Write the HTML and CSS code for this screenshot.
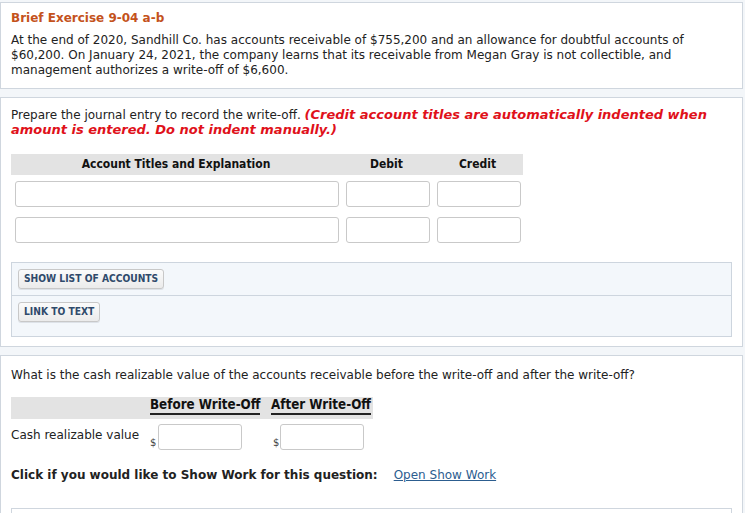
FILE: index.html
```html
<!DOCTYPE html>
<html>
<head>
<meta charset="utf-8">
<link rel="stylesheet" href="styles.css">
</head>
<body>
<div class="panel intro">
  <div class="title">Brief Exercise 9-04 a-b</div>
  <p class="body-text">At the end of 2020, Sandhill Co. has accounts receivable of $755,200 and an allowance for doubtful accounts of $60,200. On January 24, 2021, the company learns that its receivable from Megan Gray is not collectible, and management authorizes a write-off of $6,600.</p>
</div>

<div class="panel part">
  <p class="body-text prompt">Prepare the journal entry to record the write-off. <em class="note">(Credit account titles are automatically indented when amount is entered. Do not indent manually.)</em></p>
  <div class="journal">
    <div class="jhead">Account Titles and Explanation</div>
    <div class="jhead">Debit</div>
    <div class="jhead">Credit</div>
    <div class="jcell first"><input class="field" type="text"></div>
    <div class="jcell"><input class="field" type="text"></div>
    <div class="jcell"><input class="field" type="text"></div>
    <div class="jcell first last"><input class="field" type="text"></div>
    <div class="jcell last"><input class="field" type="text"></div>
    <div class="jcell last"><input class="field" type="text"></div>
  </div>
  <div class="tools">
    <div class="tool-row"><button class="btn">SHOW LIST OF ACCOUNTS</button></div>
    <div class="tool-row"><button class="btn">LINK TO TEXT</button></div>
  </div>
</div>

<div class="panel part third">
  <p class="body-text">What is the cash realizable value of the accounts receivable before the write-off and after the write-off?</p>
  <div class="crv">
    <div class="crv-head blank"></div>
    <div class="crv-head"><span>Before Write-Off</span></div>
    <div class="crv-head"><span>After Write-Off</span></div>
    <div class="crv-label">Cash realizable value</div>
    <div class="crv-cell"><span class="dollar">$</span><input class="field small" type="text"></div>
    <div class="crv-cell after"><span class="dollar">$</span><input class="field small" type="text"></div>
  </div>
  <p class="showwork">Click if you would like to Show Work for this question:<a class="link" href="#">Open Show Work</a></p>
  <div class="workbox"></div>
</div>
</body>
</html>
```

FILE: styles.css
```css
html, body {
  margin: 0;
  padding: 0;
}
body {
  background: #f3f6f9;
  font-family: Verdana, "DejaVu Sans", sans-serif;
  font-size: 12px;
  color: #222;
  padding-top: 2px;
  width: 743px;
}
.panel {
  background: #fff;
  border: 1px solid #cfd6de;
  box-sizing: border-box;
}
.intro {
  height: 87px;
  padding: 8px 10px 0 10px;
}
.title {
  color: #c4521c;
  font-weight: bold;
  font-size: 12px;
  line-height: 15px;
  margin-bottom: 7px;
}
.body-text {
  margin: 0;
  line-height: 15px;
}
.prompt {
  height: 30px;
}
.part {
  margin-top: 8px;
  padding: 10px 10px 9px 10px;
}
.note {
  color: #e0111a;
  font-weight: bold;
  font-size: 13px;
  line-height: 13px;
}
.journal {
  display: grid;
  grid-template-columns: 330px 91px 91px;
  margin-top: 16px;
}
.jhead {
  background: #e3e3e3;
  font-family: "DejaVu Sans Condensed", "DejaVu Sans", sans-serif;
  font-weight: bold;
  text-align: center;
  height: 21px;
  line-height: 21px;
  font-size: 12px;
  color: #111;
  margin-bottom: 6px;
}
.jcell {
  padding: 0 2px 0 5px;
  height: 36px;
}
.jcell.first {
  padding-left: 4px;
}
.jcell.last {
  height: 26px;
}
.field {
  display: block;
  width: 100%;
  height: 26px;
  box-sizing: border-box;
  border: 1px solid #c9c9c9;
  border-radius: 3px;
  background: #fff;
  margin: 0;
}
.tools {
  margin-top: 19px;
  background: #f3f7fb;
  border: 1px solid #cdd5de;
}
.tool-row {
  box-sizing: border-box;
  padding: 6px 6px 0 6px;
}
.tool-row:first-child {
  border-bottom: 1px solid #cdd5de;
  height: 33px;
}
.tool-row:last-child {
  height: 40px;
}
.btn {
  display: block;
  box-sizing: border-box;
  font-family: "DejaVu Sans Condensed", "DejaVu Sans", sans-serif;
  font-weight: bold;
  font-size: 10.2px;
  line-height: 18px;
  color: #2f4a6b;
  background: linear-gradient(#fbfbfb, #ebebeb);
  border: 1px solid #c8c8c8;
  border-radius: 3px;
  height: 20px;
  padding: 0 5px;
  box-shadow: 0 1px 0 #dde2e8;
}
.third {
  padding-bottom: 0;
  height: 160px;
  overflow: hidden;
}
.third .body-text {
  margin-top: 2px;
}
.crv {
  display: grid;
  grid-template-columns: 139px 121px 102px;
  margin-top: 14px;
}
.crv-head {
  background: #e3e3e3;
  height: 22px;
  font-family: "DejaVu Sans Condensed", "DejaVu Sans", sans-serif;
  font-weight: bold;
  font-size: 13.3px;
  color: #111;
  white-space: nowrap;
}
.crv-head span {
  display: inline-block;
  line-height: 16px;
  padding-top: 0;
  border-bottom: 2px solid #222;
}
.crv-label {
  padding-top: 9px;
  line-height: 15px;
}
.crv-cell {
  display: flex;
  align-items: flex-end;
  padding-top: 5px;
}
.crv-cell.after .dollar {
  margin-left: 2px;
  width: 7px;
}
.dollar {
  font-size: 10px;
  color: #444;
  width: 8px;
  line-height: 12px;
  padding-bottom: 1px;
}
.field.small {
  width: 84px;
}
.showwork {
  margin: 18px 0 0 0;
  font-weight: bold;
  line-height: 15px;
}
.link {
  font-weight: normal;
  color: #2c5d8f;
  margin-left: 16px;
}
.workbox {
  margin-top: 25px;
  height: 20px;
  border: 1px solid #cfd6de;
  background: #fff;
}
```
